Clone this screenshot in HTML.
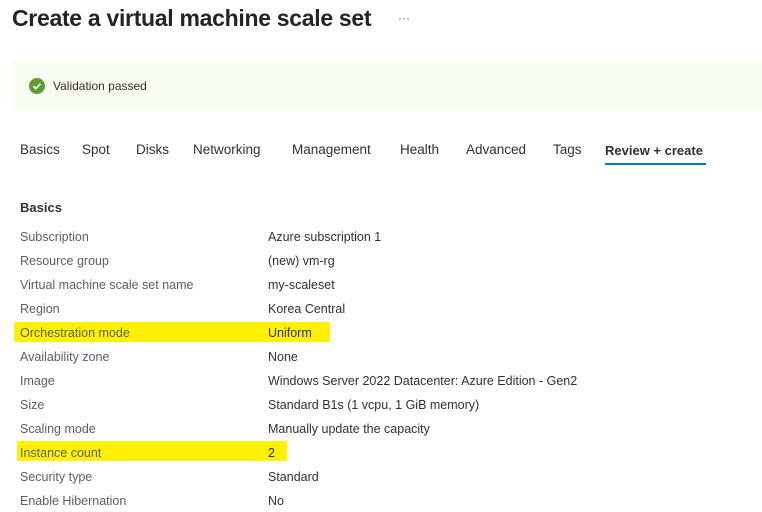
<!DOCTYPE html>
<html><head><style>
body{margin:0;width:762px;height:512px;background:#fff;font-family:"Liberation Sans",sans-serif;position:relative;overflow:hidden;color:#323130}
.a{position:absolute;white-space:nowrap}
.t{font-size:13.5px;top:142px}
.l{font-size:12.5px;color:#605e5c;left:20px}
.v{font-size:12.5px;color:#323130;left:268px}
.hl{position:absolute;background:#fff100}
</style></head><body>
<div class="a" style="left:12px;top:5px;font-size:23px;font-weight:bold;color:#252423;letter-spacing:-0.3px">Create a virtual machine scale set</div>
<div class="a" style="left:398px;top:11px;font-size:12px;color:#555">···</div>
<div class="a" style="left:12px;top:60px;width:750px;height:50px;background:#f8fdf1"></div>
<svg class="a" style="left:29px;top:78px" width="16" height="16"><circle cx="8" cy="8" r="8" fill="#5d9b33"/><path d="M4.5 8.2l2.3 2.3 4.7-4.7" stroke="#fff" stroke-width="1.8" fill="none"/></svg>
<div class="a" style="left:53px;top:79px;font-size:12px">Validation passed</div>
<div class="a t" style="left:20px">Basics</div>
<div class="a t" style="left:82px">Spot</div>
<div class="a t" style="left:136px">Disks</div>
<div class="a t" style="left:193px">Networking</div>
<div class="a t" style="left:292px">Management</div>
<div class="a t" style="left:400px">Health</div>
<div class="a t" style="left:466px">Advanced</div>
<div class="a t" style="left:553px">Tags</div>
<div class="a t" style="left:605px;font-weight:bold;font-size:13px;top:143px">Review + create</div>
<div class="a" style="left:605px;top:163px;width:101px;height:2px;background:#0078d4"></div>
<div class="a" style="left:20px;top:200px;font-size:13px;font-weight:bold">Basics</div>
<div class="hl" style="left:14px;top:322px;width:316px;height:20px"></div>
<div class="hl" style="left:17px;top:441px;width:270px;height:20px"></div>
<div class="a l" style="top:230px">Subscription</div><div class="a v" style="top:230px">Azure subscription 1</div>
<div class="a l" style="top:254px">Resource group</div><div class="a v" style="top:254px">(new) vm-rg</div>
<div class="a l" style="top:278px">Virtual machine scale set name</div><div class="a v" style="top:278px">my-scaleset</div>
<div class="a l" style="top:302px">Region</div><div class="a v" style="top:302px">Korea Central</div>
<div class="a l" style="top:326px">Orchestration mode</div><div class="a v" style="top:326px">Uniform</div>
<div class="a l" style="top:350px">Availability zone</div><div class="a v" style="top:350px">None</div>
<div class="a l" style="top:374px">Image</div><div class="a v" style="top:374px">Windows Server 2022 Datacenter: Azure Edition - Gen2</div>
<div class="a l" style="top:398px">Size</div><div class="a v" style="top:398px">Standard B1s (1 vcpu, 1 GiB memory)</div>
<div class="a l" style="top:422px">Scaling mode</div><div class="a v" style="top:422px">Manually update the capacity</div>
<div class="a l" style="top:446px">Instance count</div><div class="a v" style="top:446px">2</div>
<div class="a l" style="top:470px">Security type</div><div class="a v" style="top:470px">Standard</div>
<div class="a l" style="top:494px">Enable Hibernation</div><div class="a v" style="top:494px">No</div>
</body></html>
